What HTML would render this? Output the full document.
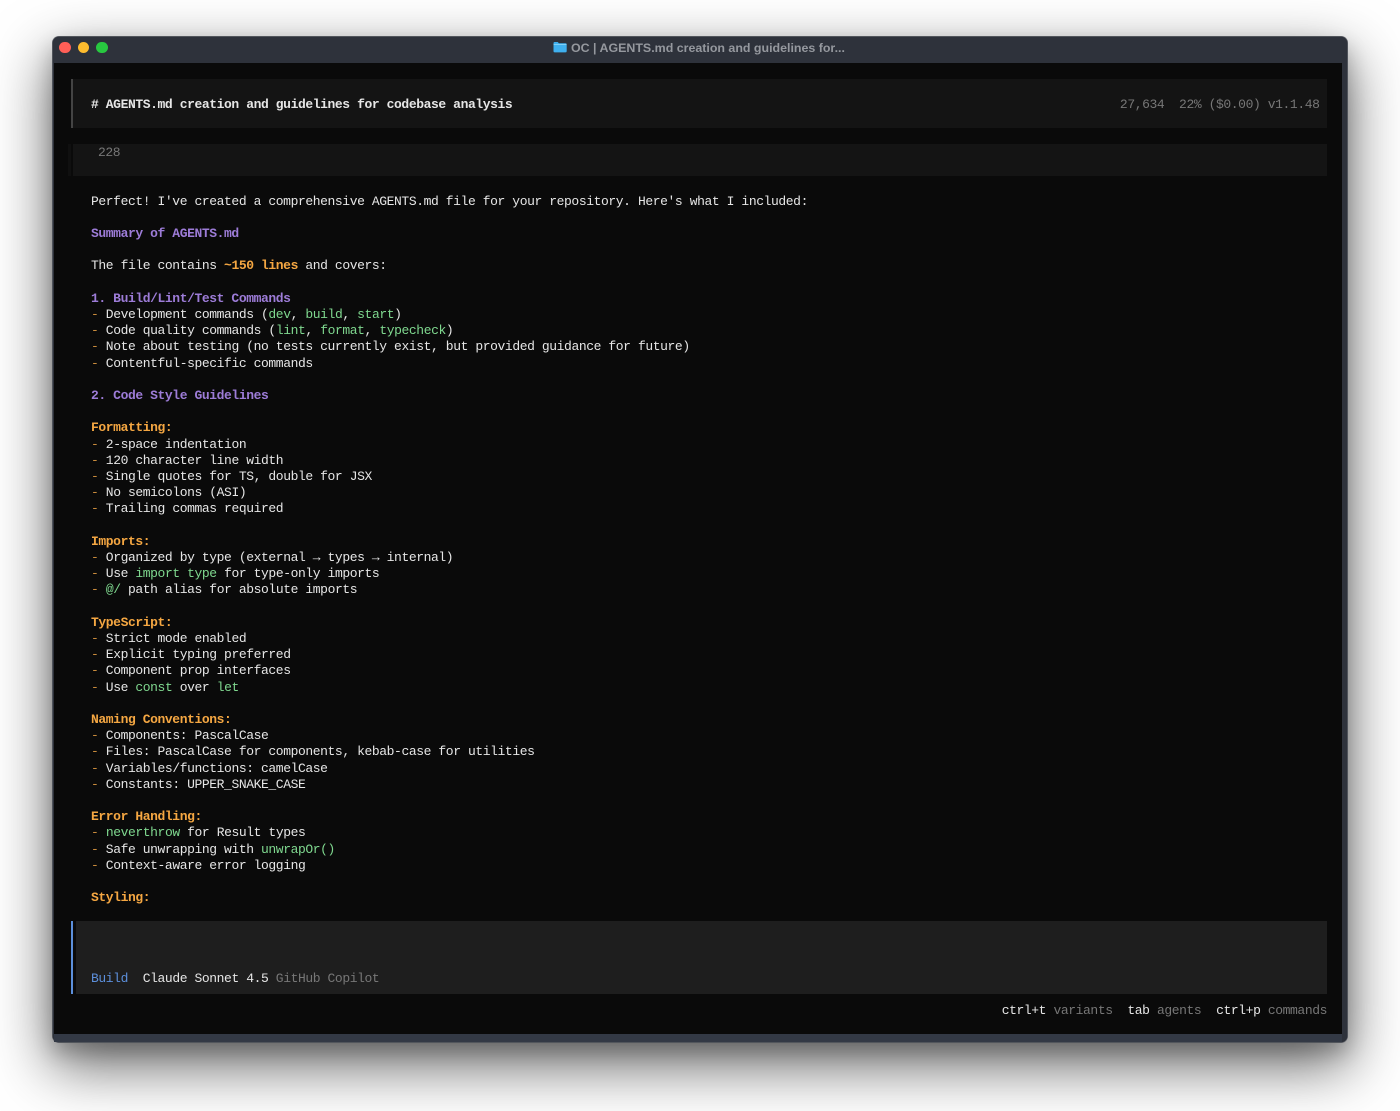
<!DOCTYPE html>
<html><head><meta charset="utf-8"><style>
html,body{margin:0;padding:0;background:#fff;width:1400px;height:1111px;overflow:hidden}
.abs{position:absolute}
#win{position:absolute;left:52px;top:36px;width:1296px;height:1006.5px;background:#2e323b;border-radius:7px;box-shadow:inset 0 0 0 .6px rgba(255,255,255,.28),0 22px 58px 2px rgba(0,0,0,.58),0 10px 20px rgba(0,0,0,.2)}
#bot{position:absolute;left:54px;top:1034px;width:1288px;height:8px;background:#333945}
#term{position:absolute;left:54px;top:63px;width:1288px;height:971px;background:#0a0a0a}
.m{font-family:"Liberation Mono",monospace;font-size:13px;letter-spacing:-.41px;white-space:pre;color:#e6e6e6;line-height:16.2px}
.d{border-radius:50%;top:41.5px;position:absolute;box-sizing:border-box;width:11.5px;height:11.5px}
b{font-weight:bold}
.p{color:#9d7cd8;font-weight:bold}.o{color:#f5a742;font-weight:bold}.g{color:#7fd88f}.n{color:#c98b3c}.x{color:#777}
</style></head><body>
<div id="win"></div>
<div id="bot"></div>
<div class="d" style="left:59px;background:#ff5f57"></div>
<div class="d" style="left:77.5px;background:#febc2e"></div>
<div class="d" style="left:96px;background:#28c840"></div>
<svg class="abs" style="left:553px;top:41px" width="14" height="12" viewBox="0 0 14 12"><path d="M0.5 2.2q0-1.2 1.2-1.2h3l1.2 1.2h6.6q1.2 0 1.2 1.2v6.8q0 1.2-1.2 1.2H1.7q-1.2 0-1.2-1.2z" fill="#3fb0ee"/><rect x="0.5" y="3" width="13" height="1" fill="#7fd0f7"/></svg>
<div class="abs" style="left:571px;top:40.5px;font:bold 12.42px/15px 'Liberation Sans',sans-serif;color:#95989e;white-space:pre">OC | AGENTS.md creation and guidelines for...</div>
<div id="term"></div>
<div class="abs" style="left:71px;top:79px;width:1256px;height:49px;background:#141414"></div>
<div class="abs" style="left:71px;top:79px;width:2px;height:49px;background:#444"></div>
<div class="abs" style="left:68px;top:144px;width:3px;height:32px;background:#101010"></div>
<div class="abs" style="left:73px;top:144px;width:1254px;height:32px;background:#141414"></div>
<div class="abs" style="left:76px;top:921px;width:1251px;height:73px;background:#1e1e1e"></div>
<div class="abs" style="left:71px;top:921px;width:2px;height:73px;background:#5c8fdb"></div>
<div class="abs m" style="left:91px;top:96.5px"><b>#&#32;AGENTS.md creation and guidelines for codebase analysis</b></div>
<div class="abs m x" style="right:80.5px;top:96.5px">27,634  22% ($0.00) v1.1.48</div>
<div class="abs m x" style="left:98px;top:145px">228</div>
<div class="abs m" style="left:91px;top:193.5px">Perfect! I've created a comprehensive AGENTS.md file for your repository. Here's what I included:

<span class="p">Summary of AGENTS.md</span>

The file contains <span class="o">~150 lines</span> and covers:

<span class="p">1. Build/Lint/Test Commands</span>
<span class="n">-</span> Development commands (<span class="g">dev</span>, <span class="g">build</span>, <span class="g">start</span>)
<span class="n">-</span> Code quality commands (<span class="g">lint</span>, <span class="g">format</span>, <span class="g">typecheck</span>)
<span class="n">-</span> Note about testing (no tests currently exist, but provided guidance for future)
<span class="n">-</span> Contentful-specific commands

<span class="p">2. Code Style Guidelines</span>

<span class="o">Formatting:</span>
<span class="n">-</span> 2-space indentation
<span class="n">-</span> 120 character line width
<span class="n">-</span> Single quotes for TS, double for JSX
<span class="n">-</span> No semicolons (ASI)
<span class="n">-</span> Trailing commas required

<span class="o">Imports:</span>
<span class="n">-</span> Organized by type (external → types → internal)
<span class="n">-</span> Use <span class="g">import type</span> for type-only imports
<span class="n">-</span> <span class="g">@/</span> path alias for absolute imports

<span class="o">TypeScript:</span>
<span class="n">-</span> Strict mode enabled
<span class="n">-</span> Explicit typing preferred
<span class="n">-</span> Component prop interfaces
<span class="n">-</span> Use <span class="g">const</span> over <span class="g">let</span>

<span class="o">Naming Conventions:</span>
<span class="n">-</span> Components: PascalCase
<span class="n">-</span> Files: PascalCase for components, kebab-case for utilities
<span class="n">-</span> Variables/functions: camelCase
<span class="n">-</span> Constants: UPPER_SNAKE_CASE

<span class="o">Error Handling:</span>
<span class="n">-</span> <span class="g">neverthrow</span> for Result types
<span class="n">-</span> Safe unwrapping with <span class="g">unwrapOr()</span>
<span class="n">-</span> Context-aware error logging

<span class="o">Styling:</span></div>
<div class="abs m" style="left:91px;top:971px"><span style="color:#5c8fdb">Build</span>  Claude Sonnet 4.5 <span class="x">GitHub Copilot</span></div>
<div class="abs m" style="right:73px;top:1003px">ctrl+t <span class="x">variants</span>  tab <span class="x">agents</span>  ctrl+p <span class="x">commands</span></div>
</body></html>
